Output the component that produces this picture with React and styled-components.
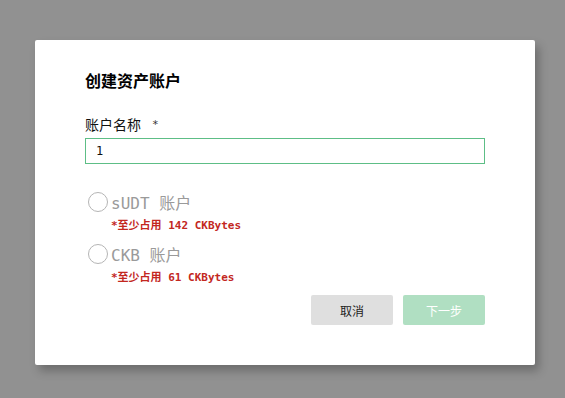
import styled, { createGlobalStyle } from "styled-components";

const Global = createGlobalStyle`
  html, body { margin: 0; padding: 0; }
  body {
    background: #919191;
    font-family: "Noto Sans", "Noto Sans CJK SC", sans-serif;
  }
`

const Overlay = styled.div`
  width: 565px;
  height: 398px;
  box-sizing: border-box;
  padding: 40px 30px 33px 35px;
  background: #919191;
`

const Dialog = styled.div`
  width: 500px;
  height: 325px;
  box-sizing: border-box;
  padding: 30px 50px 40px;
  background: #fff;
  border-radius: 2px;
  box-shadow: 4px 6px 10px rgba(0, 0, 0, 0.25);
  display: flex;
  flex-direction: column;
`

const Title = styled.h2`
  margin: 0;
  font-size: 16px;
  line-height: 20px;
  font-weight: 700;
  color: #000;
  font-family: "Noto Sans CJK SC", sans-serif;
`

const Label = styled.label`
  margin-top: 24px;
  height: 20px;
  display: flex;
  align-items: center;
  font-size: 14px;
  line-height: 20px;
  color: #111;
  font-family: "Noto Sans CJK SC", sans-serif;
  span {
    font-family: "DejaVu Sans Mono", monospace;
    font-size: 11px;
    line-height: 11px;
    margin-left: 11px;
    color: #333;
  }
`

const Input = styled.input`
  margin-top: 4px;
  height: 26px;
  flex-shrink: 0;
  box-sizing: border-box;
  border: 1px solid #5dbe86;
  outline: none;
  padding: 0 10px;
  font-size: 12px;
  font-family: "DejaVu Sans Mono", monospace;
  color: #111;
`

const Option = styled.label`
  display: flex;
  align-items: center;
  height: 22px;
  margin-top: ${(p) => p.$gap}px;
  padding-left: 3px;
  font-family: "DejaVu Sans Mono", "Noto Sans CJK SC", monospace;
  font-size: 16px;
  color: #9a9a9a;
`

const Circle = styled.span`
  width: 18px;
  height: 18px;
  border: 1px solid #b5b5b5;
  border-radius: 50%;
  margin-right: 3px;
`

const Hint = styled.div`
  margin-top: 4px;
  padding-left: 26px;
  line-height: 17px;
  font-size: 11px;
  font-weight: 700;
  color: #c3281f;
  font-family: "DejaVu Sans Mono", "Noto Sans CJK SC", monospace;
`

const Actions = styled.div`
  margin-top: 9px;
  display: flex;
  justify-content: flex-end;
  gap: 10px;
`

const Button = styled.button`
  width: 82px;
  height: 30px;
  border: none;
  border-radius: 2px;
  font-size: 12px;
  font-family: "Noto Sans CJK SC", sans-serif;
  background: ${(p) => (p.$primary ? "#b0dfc2" : "#dfdfdf")};
  color: ${(p) => (p.$primary ? "#fff" : "#222")};
`

export default function App() {
  return (
    <>
      <Global />
      <Overlay>
        <Dialog>
          <Title>创建资产账户</Title>
          <Label>
            账户名称<span>*</span>
          </Label>
          <Input defaultValue="1" />
          <Option $gap={27}>
            <Circle />
            sUDT 账户
          </Option>
          <Hint>*至少占用 142 CKBytes</Hint>
          <Option $gap={9}>
            <Circle />
            CKB 账户
          </Option>
          <Hint>*至少占用 61 CKBytes</Hint>
          <Actions>
            <Button>取消</Button>
            <Button $primary disabled>
              下一步
            </Button>
          </Actions>
        </Dialog>
      </Overlay>
    </>
  )
}
